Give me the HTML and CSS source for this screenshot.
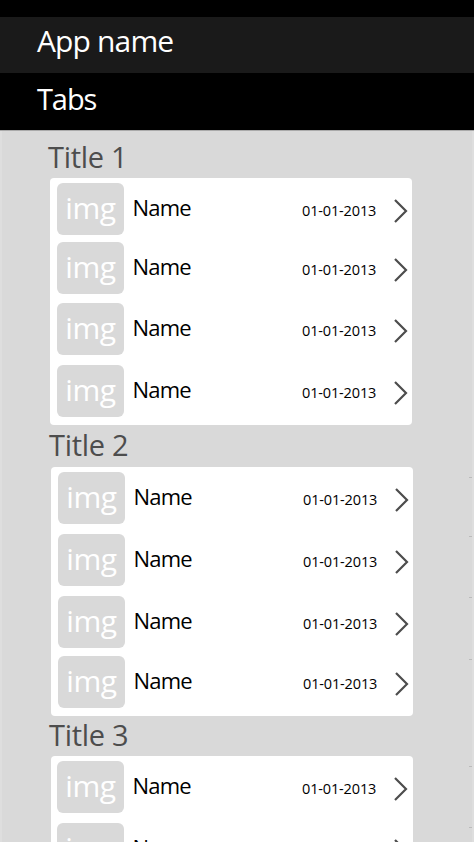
FILE: index.html
```
<!DOCTYPE html>
<html lang="en">
<head>
<meta charset="utf-8">
<title>App name</title>
<link rel="stylesheet" href="styles.css">
</head>
<body>
<div class="status"></div>
<header class="appbar">App name</header>
<nav class="tabs">Tabs</nav>
<main class="content">
  <section class="group group-1">
    <h2 class="title">Title 1</h2>
    <ul class="card">
      <li class="row"><span class="img">img</span><span class="name">Name</span><span class="date">01-01-2013</span><svg class="chev" viewBox="0 0 16 24"><path d="M2 1 L13 12 L2 23"/></svg></li>
      <li class="row gap-7"><span class="img">img</span><span class="name">Name</span><span class="date">01-01-2013</span><svg class="chev" viewBox="0 0 16 24"><path d="M2 1 L13 12 L2 23"/></svg></li>
      <li class="row gap-9"><span class="img">img</span><span class="name">Name</span><span class="date">01-01-2013</span><svg class="chev" viewBox="0 0 16 24"><path d="M2 1 L13 12 L2 23"/></svg></li>
      <li class="row gap-10"><span class="img">img</span><span class="name">Name</span><span class="date">01-01-2013</span><svg class="chev" viewBox="0 0 16 24"><path d="M2 1 L13 12 L2 23"/></svg></li>
    </ul>
  </section>
  <section class="group group-2">
    <h2 class="title">Title 2</h2>
    <ul class="card">
      <li class="row"><span class="img">img</span><span class="name">Name</span><span class="date">01-01-2013</span><svg class="chev" viewBox="0 0 16 24"><path d="M2 1 L13 12 L2 23"/></svg></li>
      <li class="row gap-10"><span class="img">img</span><span class="name">Name</span><span class="date">01-01-2013</span><svg class="chev" viewBox="0 0 16 24"><path d="M2 1 L13 12 L2 23"/></svg></li>
      <li class="row gap-10"><span class="img">img</span><span class="name">Name</span><span class="date">01-01-2013</span><svg class="chev" viewBox="0 0 16 24"><path d="M2 1 L13 12 L2 23"/></svg></li>
      <li class="row gap-8"><span class="img">img</span><span class="name">Name</span><span class="date">01-01-2013</span><svg class="chev" viewBox="0 0 16 24"><path d="M2 1 L13 12 L2 23"/></svg></li>
    </ul>
  </section>
  <section class="group group-3">
    <h2 class="title">Title 3</h2>
    <ul class="card">
      <li class="row"><span class="img">img</span><span class="name">Name</span><span class="date">01-01-2013</span><svg class="chev" viewBox="0 0 16 24"><path d="M2 1 L13 12 L2 23"/></svg></li>
      <li class="row gap-10"><span class="img">img</span><span class="name">Name</span><span class="date">01-01-2013</span><svg class="chev" viewBox="0 0 16 24"><path d="M2 1 L13 12 L2 23"/></svg></li>
    </ul>
  </section>
  <span class="tick tick-1"></span>
  <span class="tick tick-2"></span>
  <span class="tick tick-3"></span>
  <span class="tick tick-4"></span>
  <span class="tick tick-5"></span>
  <span class="tick tick-6"></span>
</main>
</body>
</html>
```
FILE: styles.css
```
* { box-sizing: border-box; margin: 0; padding: 0; }
html, body { height: 842px; overflow: hidden; }
body { background: #d9d9d9; font-family: "Open Sans", "Noto Sans", sans-serif; color: #000; }
.status { height: 17px; background: #000; }
.appbar { height: 56px; background: #1a1a1a; color: #fff; font-size: 30px; letter-spacing: -0.85px; line-height: 47px; padding-left: 37px; }
.tabs { height: 58px; background: #000; color: #fff; font-size: 29px; letter-spacing: -1.1px; line-height: 52px; padding-left: 37px; border-bottom: 1px solid #aaa; }
.content { display: flex; flex-direction: column; position: relative; height: 712px; overflow: hidden; border-left: 2px solid #dedede; border-right: 2px solid #dedede; }
.group-1 { margin-left: 48px; }
.group-2 { margin-left: 49px; }
.group-3 { margin-left: 49px; }
.title { font-size: 29px; font-weight: 400; letter-spacing: -0.3px; color: #4d4d4d; height: 47px; line-height: 52px; margin-left: -2px; }
.group-2 .title { height: 42px; line-height: 40px; }
.group-3 .title { height: 40px; line-height: 38px; }
.card { list-style: none; width: 362px; background: #fff; border-radius: 4px; padding: 5px 0 8px 7px; }
.group-3 .card { padding-left: 6px; }
.row { display: flex; align-items: center; height: 52px; }
.gap-7 { margin-top: 7px; }
.gap-8 { margin-top: 8px; }
.gap-9 { margin-top: 9px; }
.gap-10 { margin-top: 10px; }
.img { width: 67px; height: 52px; background: #d9d9d9; border-radius: 6px; color: #fff; font-size: 30px; letter-spacing: -0.3px; text-align: center; line-height: 50px; flex: none; }
.name { margin-left: 8.5px; font-size: 22px; letter-spacing: -0.8px; width: 170px; flex: none; line-height: 1; margin-top: -4px; }
.date { font-size: 14.5px; letter-spacing: -0.15px; width: 92px; flex: none; margin-top: 2px; margin-left: -0.5px; }
.chev { width: 16px; height: 24px; flex: none; margin-top: 4px; margin-left: -1.5px; }
.chev path { fill: none; stroke: #4d4d4d; stroke-width: 2.2; }
.tick { position: absolute; right: 0; width: 3px; height: 1px; background: #bbb; }
.tick-1 { top: 346px; }
.tick-2 { top: 405px; }
.tick-3 { top: 466px; }
.tick-4 { top: 528px; }
.tick-5 { top: 635px; }
.tick-6 { top: 696px; }
```
